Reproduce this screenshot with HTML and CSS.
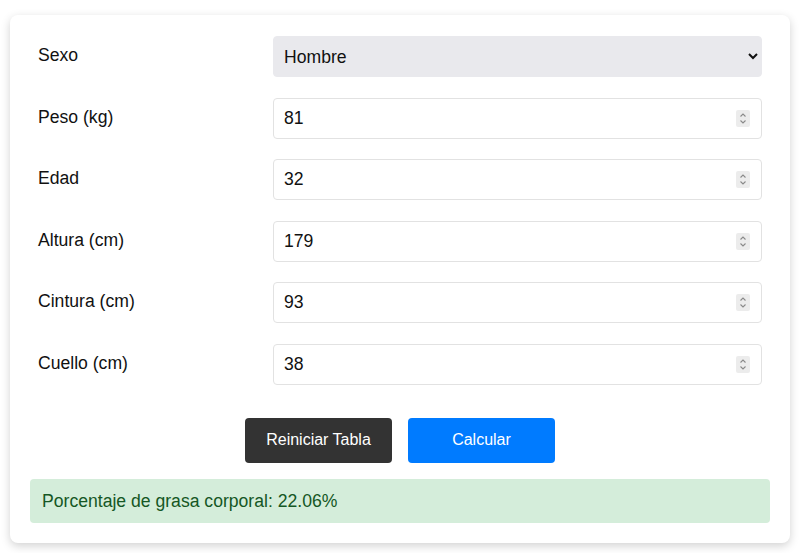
FILE: index.html
```html
<!DOCTYPE html>
<html>
<head>
    <title>Calculadora de grasa corporal</title>
    <link rel="stylesheet" href="styles.css">
</head>
<body>
    <div class="container">
        <div class="form-group">
            <label class="form-label" for="sexo">Sexo</label>
            <select id="sexo" class="form-select">
                <option>Hombre</option>
                <option>Mujer</option>
            </select>
        </div>
        <div class="form-group">
            <label class="form-label" for="peso">Peso (kg)</label>
            <div class="number-field">
                <input id="peso" class="number-input" type="text" value="81">
                <svg class="spinner" width="14" height="17" viewBox="0 0 14 17"><path d="M4.5 6.5 7 4l2.5 2.5M4.5 10.5 7 13l2.5-2.5" fill="none" stroke="#8a8a8a" stroke-width="1.1"/></svg>
            </div>
        </div>
        <div class="form-group">
            <label class="form-label" for="edad">Edad</label>
            <div class="number-field">
                <input id="edad" class="number-input" type="text" value="32">
                <svg class="spinner" width="14" height="17" viewBox="0 0 14 17"><path d="M4.5 6.5 7 4l2.5 2.5M4.5 10.5 7 13l2.5-2.5" fill="none" stroke="#8a8a8a" stroke-width="1.1"/></svg>
            </div>
        </div>
        <div class="form-group">
            <label class="form-label" for="altura">Altura (cm)</label>
            <div class="number-field">
                <input id="altura" class="number-input" type="text" value="179">
                <svg class="spinner" width="14" height="17" viewBox="0 0 14 17"><path d="M4.5 6.5 7 4l2.5 2.5M4.5 10.5 7 13l2.5-2.5" fill="none" stroke="#8a8a8a" stroke-width="1.1"/></svg>
            </div>
        </div>
        <div class="form-group">
            <label class="form-label" for="cintura">Cintura (cm)</label>
            <div class="number-field">
                <input id="cintura" class="number-input" type="text" value="93">
                <svg class="spinner" width="14" height="17" viewBox="0 0 14 17"><path d="M4.5 6.5 7 4l2.5 2.5M4.5 10.5 7 13l2.5-2.5" fill="none" stroke="#8a8a8a" stroke-width="1.1"/></svg>
            </div>
        </div>
        <div class="form-group">
            <label class="form-label" for="cuello">Cuello (cm)</label>
            <div class="number-field">
                <input id="cuello" class="number-input" type="text" value="38">
                <svg class="spinner" width="14" height="17" viewBox="0 0 14 17"><path d="M4.5 6.5 7 4l2.5 2.5M4.5 10.5 7 13l2.5-2.5" fill="none" stroke="#8a8a8a" stroke-width="1.1"/></svg>
            </div>
        </div>

        <div class="button-group">
            <button class="button dark">Reiniciar Tabla</button>
            <button class="button primary">Calcular</button>
        </div>

        <div class="result">Porcentaje de grasa corporal: 22.06%</div>
    </div>
</body>
</html>
```

FILE: styles.css
```css
body {
    margin: 0;
    padding: 15px 10px 11px;
    background: #ffffff;
    font-family: 'Liberation Sans', Arial, sans-serif;
    color: #111;
}

.container {
    background: #ffffff;
    border-radius: 8px;
    box-shadow: 0 3px 10px rgba(0, 0, 0, 0.18);
    padding: 21px 20px 20px;
}

.form-group {
    display: grid;
    grid-template-columns: 235px 1fr;
    align-items: center;
    padding: 0 8px;
    margin-bottom: 20.5px;
}

.form-label {
    font-size: 17.6px;
    margin-bottom: 2px;
}

.form-select {
    height: 41px;
    font-family: inherit;
    font-size: 17.6px;
    padding: 0 6px;
    background: #e9e9ed;
    border: 1px solid #e9e9ed;
    border-radius: 4px;
    color: #111;
}

.number-field {
    display: flex;
    align-items: center;
    height: 41px;
    box-sizing: border-box;
    border: 1px solid #e2e2e2;
    border-radius: 4px;
    padding: 0 11px 0 10px;
    background: #fff;
}

.number-input {
    flex: 1;
    min-width: 0;
    border: none;
    outline: none;
    padding: 0;
    font-family: inherit;
    font-size: 17.6px;
    color: #111;
    background: transparent;
}

.spinner {
    background: #ececec;
    border-radius: 2px;
}

.button-group {
    display: flex;
    justify-content: center;
    gap: 16px;
    margin-top: 33px;
    margin-bottom: 16px;
}

.button {
    width: 147px;
    height: 45px;
    border: none;
    border-radius: 4px;
    font-family: inherit;
    font-size: 16px;
    color: #fff;
    cursor: pointer;
}

.button.dark {
    background: #333333;
}

.button.primary {
    background: #007bff;
}

.result {
    background: #d4edda;
    color: #155724;
    border-radius: 4px;
    font-size: 17.6px;
    padding: 12px 12px;
    height: 44px;
    box-sizing: border-box;
}
```
